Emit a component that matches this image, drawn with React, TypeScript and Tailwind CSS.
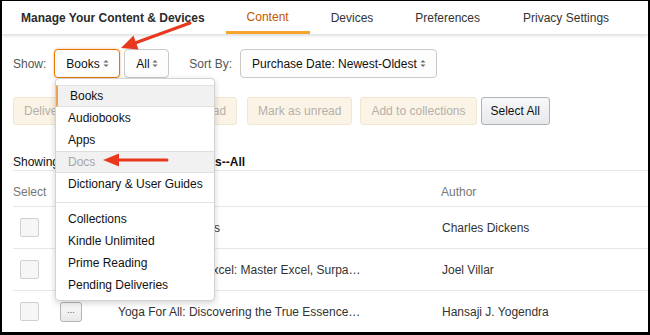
import React from 'react';

interface Row {
  title: string;
  author: string;
  more?: boolean;
}

const rows: Row[] = [
  { title: 'Great Expectations', author: 'Charles Dickens' },
  { title: 'Microsoft Office Excel: Master Excel, Surpass Your Colleagues and Save Time', author: 'Joel Villar' },
  { title: 'Yoga For All: Discovering the True Essence of Yoga', author: 'Hansaji J. Yogendra', more: true },
];

const menu = ['Books', 'Audiobooks', 'Apps', 'Docs', 'Dictionary & User Guides'];
const menu2 = ['Collections', 'Kindle Unlimited', 'Prime Reading', 'Pending Deliveries'];

function UpDown() {
  return (
    <svg width="6" height="9" viewBox="0 0 6 9" className="shrink-0">
      <path d="M0.5 3.5 L3 1 L5.5 3.5 Z" fill="#6b6b6b" />
      <path d="M0.5 5.5 L3 8 L5.5 5.5 Z" fill="#6b6b6b" />
    </svg>
  );
}

function Select({ label, width, active }: { label: string; width: string; active?: boolean }) {
  return (
    <div
      className={`${width} h-[29px] flex items-center justify-between pl-[11px] pr-[10px] rounded-[4px] bg-[#fdfdfd] text-[12px] text-[#111] border ${
        active ? 'border-[#e77600] shadow-[0_0_2px_1px_rgba(228,121,17,0.25)]' : 'border-[#c9c9c9]'
      }`}
    >
      <span>{label}</span>
      <UpDown />
    </div>
  );
}

function Disabled({ label, className }: { label: string; className?: string }) {
  return (
    <div
      className={`h-[28px] px-[10px] flex items-center rounded-[3px] border border-[#f1e6cf] bg-[#fbf4e6] text-[12px] text-[#b3b0aa] ${className ?? ''}`}
    >
      {label}
    </div>
  );
}

export default function App() {
  return (
    <div className="relative w-[650px] h-[335px] overflow-hidden bg-white border-l-2 border-r-2 border-t border-b-[3px] border-black font-['Liberation_Sans',Arial,sans-serif]">
      {/* header */}
      <div className="relative z-10 h-[33px] flex bg-white shadow-[0_2px_3px_rgba(0,0,0,0.13)]">
        <div className="pl-[19px] flex items-center text-[12px] font-bold text-[#2b2b2b]">
          Manage Your Content &amp; Devices
        </div>
        <div className="ml-[21px] flex text-[12px] text-[#333]">
          <div className="px-[21px] flex items-center pt-[1px] text-[#c45500] border-b-[3px] border-[#f6a42b]">Content</div>
          <div className="px-[21px] flex items-center">Devices</div>
          <div className="px-[21px] flex items-center">Preferences</div>
          <div className="px-[22px] flex items-center">Privacy Settings</div>
        </div>
      </div>

      {/* filters */}
      <div className="mt-[15px] pl-[11px] flex items-center h-[29px] text-[12px]">
        <span className="text-[#555] mr-[8px]">Show:</span>
        <Select label="Books" width="w-[66px]" active />
        <div className="w-[4px]" />
        <Select label="All" width="w-[45px]" />
        <span className="text-[#555] ml-[20px] mr-[8px]">Sort By:</span>
        <Select label="Purchase Date: Newest-Oldest" width="w-[197px]" />
      </div>

      {/* actions */}
      <div className="mt-[19px] pl-[11px] flex">
        <Disabled label="Deliver" />
        <Disabled label="Delete" className="ml-[6px]" />
        <Disabled label="Mark as read" className="ml-[10px]" />
        <Disabled label="Mark as unread" className="ml-[10px]" />
        <Disabled label="Add to collections" className="ml-[8px]" />
        <div className="ml-[4px] h-[28px] px-[9px] flex items-center rounded-[3px] border border-[#adb1b8] bg-gradient-to-b from-[#f7f8fa] to-[#e7e9ec] text-[12px] text-[#111]">
          Select All
        </div>
      </div>

      {/* showing */}
      <div className="mt-[28px] ml-[11px] h-[18px] leading-[18px] text-[12px] text-[#111] border-b border-[#e7e7e7]">
        Showing 1 - 3 of 3 Kindle items: <span className="font-bold">Books--All</span>
      </div>

      {/* table */}
      <div className="ml-[11px] text-[#333] text-[12px]">
        <div className="h-[36px] flex items-end pb-[5px] text-[#777] border-b border-[#e7e7e7]">
          <span className="w-[428px]">Select</span>
          <span>Author</span>
        </div>
        {rows.map((r) => (
          <div key={r.author} className="h-[42px] flex items-center border-b border-[#e7e7e7]">
            <div className="w-[105px] flex items-center pl-[7px]">
              <div className="w-[19px] h-[19px] rounded-[2px] border border-[#d0d0d0] bg-[#f6f6f6]" />
              {r.more && (
                <div className="ml-[21px] w-[22px] h-[20px] rounded-[3px] border border-[#b4b4b4] bg-gradient-to-b from-[#fafafa] to-[#e9e9e9] flex items-center justify-center text-[9px] text-[#555] leading-none pb-[3px]">
                  ...
                </div>
              )}
            </div>
            <div className="w-[324px]">
              <div className="w-[244px] truncate">{r.title}</div>
            </div>
            <div>{r.author}</div>
          </div>
        ))}
      </div>

      {/* dropdown */}
      <div className="absolute z-20 left-[53px] top-[77px] w-[160px] pt-[6px] pb-[4px] bg-white border border-[#d3d3d3] rounded-[4px] shadow-[0_2px_6px_rgba(0,0,0,0.18)] text-[12px] text-[#111]">
        {menu.map((m) => {
          const hl = m === 'Books';
          const dim = m === 'Docs';
          return (
            <div
              key={m}
              className={`h-[22px] flex items-center pl-[12px] ${
                hl
                  ? 'bg-[#f1f1f1] border-y border-[#e2e2e2] border-l-2 border-l-[#f0a250] pl-[10px]'
                  : dim
                  ? 'bg-[#f1f1f1] border-y border-[#dedede] text-[#a6a6a6]'
                  : ''
              }`}
            >
              {m}
            </div>
          );
        })}
        <div className="mt-[7px] mb-[5px] h-px bg-[#e3e3e3]" />
        {menu2.map((m) => (
          <div key={m} className="h-[22px] flex items-center pl-[12px]">
            {m}
          </div>
        ))}
      </div>

      {/* annotation arrows */}
      <svg className="absolute z-30 left-[-2px] top-[-1px]" width="650" height="335" viewBox="0 0 650 335">
        <line x1="190" y1="23" x2="135" y2="43" stroke="#e8391f" strokeWidth="3" strokeLinecap="round" />
        <polygon points="121,48 138.5,49.5 133.5,35.5" fill="#e8391f" />
        <line x1="167" y1="160" x2="117" y2="160" stroke="#e8391f" strokeWidth="3" strokeLinecap="round" />
        <polygon points="103,160 119,153.5 119,166.5" fill="#e8391f" />
      </svg>
    </div>
  );
}
